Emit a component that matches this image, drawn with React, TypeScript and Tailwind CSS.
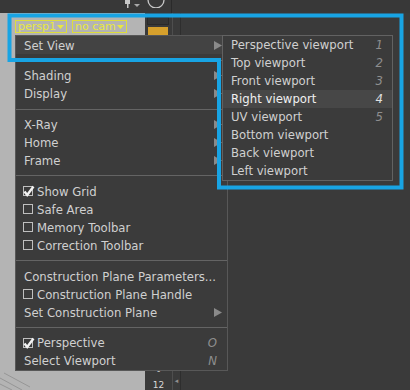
import React from "react";

type Item =
  | { sep: true }
  | {
      sep?: false;
      label: string;
      arrow?: boolean;
      check?: boolean;
      checked?: boolean;
      shortcut?: string;
      hl?: boolean;
    };

const mainItems: Item[] = [
  { label: "Set View", arrow: true, hl: true },
  { sep: true },
  { label: "Shading", arrow: true },
  { label: "Display", arrow: true },
  { sep: true },
  { label: "X-Ray", arrow: true },
  { label: "Home", arrow: true },
  { label: "Frame", arrow: true },
  { sep: true },
  { label: "Show Grid", check: true, checked: true },
  { label: "Safe Area", check: true },
  { label: "Memory Toolbar", check: true },
  { label: "Correction Toolbar", check: true },
  { sep: true },
  { label: "Construction Plane Parameters..." },
  { label: "Construction Plane Handle", check: true },
  { label: "Set Construction Plane", arrow: true },
  { sep: true },
  { label: "Perspective", check: true, checked: true, shortcut: "O" },
  { label: "Select Viewport", shortcut: "N" },
];

const subItems: { label: string; key?: string; hl?: boolean }[] = [
  { label: "Perspective viewport", key: "1" },
  { label: "Top viewport", key: "2" },
  { label: "Front viewport", key: "3" },
  { label: "Right viewport", key: "4", hl: true },
  { label: "UV viewport", key: "5" },
  { label: "Bottom viewport" },
  { label: "Back viewport" },
  { label: "Left viewport" },
];

function Arrow() {
  return (
    <svg width="8" height="9" viewBox="0 0 8 9" className="ml-auto">
      <path d="M0 0 L8 4.5 L0 9 Z" fill="#8a8a8a" />
    </svg>
  );
}

function CheckBox({ checked }: { checked?: boolean }) {
  return (
    <span className="relative w-[10px] h-[10px] border border-[#bfbfbf] mr-[4px] shrink-0">
      {checked && (
        <svg
          width="12"
          height="12"
          viewBox="0 0 12 12"
          className="absolute left-[-1px] top-[-2px]"
        >
          <path
            d="M1.5 6.5 L4.2 10 L10.5 1.5"
            fill="none"
            stroke="#f2f2f2"
            strokeWidth="2.4"
            strokeLinejoin="miter"
          />
        </svg>
      )}
    </span>
  );
}

function MainMenu() {
  return (
    <div className="absolute left-[15px] top-[35px] w-[213px] h-[336px] bg-[#3b3b3b] border border-[#585858] flex flex-col text-[11.7px] text-[#d0d0d0]">
      {mainItems.map((it, i) =>
        it.sep ? (
          <div key={i} className="h-[13px] flex items-center">
            <div className="h-px w-full bg-[#646464]" />
          </div>
        ) : (
          <div
            key={i}
            className={`h-[18px] flex items-center pr-[5px] ${
              it.check ? "pl-[7px]" : "pl-[8px]"
            } ${it.hl ? "bg-[#434343]" : ""}`}
          >
            {it.check && <CheckBox checked={it.checked} />}
            <span className="whitespace-nowrap leading-[18px] pt-[1px]">{it.label}</span>
            {it.arrow && <Arrow />}
            {it.shortcut && (
              <span className="ml-auto mr-[5px] italic text-[#8e8e8e] pt-[1px]">
                {it.shortcut}
              </span>
            )}
          </div>
        )
      )}
    </div>
  );
}

function SubMenu() {
  return (
    <div className="absolute left-[222px] top-[35px] w-[171px] h-[146px] bg-[#3b3b3b] border border-[#626262] flex flex-col text-[11.7px] text-[#d0d0d0]">
      {subItems.map((it, i) => (
        <div
          key={i}
          className={`h-[18px] flex items-center pl-[8px] pr-[9px] ${
            it.hl ? "bg-[#474747] text-[#f0f0f0]" : ""
          }`}
        >
          <span className="whitespace-nowrap pt-[1px]">{it.label}</span>
          {it.key && (
            <span
              className={`ml-auto italic pt-[1px] ${
                it.hl ? "text-[#e0e0e0]" : "text-[#8e8e8e]"
              }`}
            >
              {it.key}
            </span>
          )}
        </div>
      ))}
    </div>
  );
}

function Tag({ text }: { text: string }) {
  return (
    <div className="h-[13px] border border-[#dede3c] flex items-center px-[2px] text-[11px] leading-none text-[#e8e840]">
      <span>{text}</span>
      <svg width="7" height="5" viewBox="0 0 7 5" className="ml-[1px] mt-[1px]">
        <path d="M0 0 H7 L3.5 4 Z" fill="#e8e840" />
      </svg>
    </div>
  );
}

export default function App() {
  return (
    <div className="relative w-[410px] h-[390px] overflow-hidden bg-[#3a3a3a] font-['DejaVu_Sans',sans-serif] flex flex-col">
      {/* top bar */}
      <div className="h-[13px] flex bg-[#383838] shrink-0">
        <div className="w-[172px] flex justify-end items-start pr-[6px] gap-[3px] border-r border-[#2a2a2a]">
          <svg width="20" height="10" viewBox="0 0 20 10">
            <rect x="1" y="0" width="5" height="4" fill="#c8c8c8" />
            <rect x="3" y="4" width="1.5" height="4" fill="#c8c8c8" />
            <path d="M10 4 H16 L13 7 Z" fill="#a8a8a8" />
          </svg>
          <svg width="18" height="8" viewBox="0 0 18 8">
            <path
              d="M1 0 A8 8 0 0 0 17 0"
              fill="none"
              stroke="#c8c8c8"
              strokeWidth="1.3"
            />
          </svg>
        </div>
        <div className="flex-1" />
      </div>
      {/* body */}
      <div className="flex flex-1">
        <div className="relative w-[145px] bg-[#b4b4b4] pt-[7px] pl-[15px]">
          <div className="flex gap-[5px]">
            <Tag text="persp1" />
            <Tag text="no cam" />
          </div>
          <svg
            width="40"
            height="30"
            viewBox="0 0 40 30"
            className="absolute left-0 bottom-0"
          >
            <path
              d="M0 18 L22 30 M0 24 L12 30 M4 13 L30 27"
              stroke="#8e8e8e"
              strokeWidth="0.8"
              fill="none"
            />
          </svg>
        </div>
        <div className="w-[27px] bg-[#3a3a3a] flex flex-col items-start">
          <div className="mt-[4px] ml-[2px] w-[22px] h-[8px] border border-[#2a2a2a] bg-[#353535]" />
          <div className="mt-[2px] ml-[3px] w-[20px] h-[20px] bg-[#d6a02c]" />
          <div className="mt-auto w-full flex flex-col items-center text-[9px] text-[#d8d8d8] leading-none pb-[0px]">
            <span className="mb-[5px]">-</span>
            <span>12</span>
          </div>
        </div>
        <div className="flex-1 border-l border-[#4e4e4e] flex">
          <div className="w-[7px] flex items-end pb-[4px] justify-center text-[7px] text-[#909090]">
            ◂
          </div>
          <div className="flex-1 border-l border-[#2e2e2e]" />
        </div>
      </div>

      <MainMenu />
      <SubMenu />

      <svg
        width="410"
        height="390"
        className="absolute left-0 top-0 pointer-events-none"
      >
        <path
          d="M9.5 15.5 H401.5 V187.5 H219 V60 H9.5 Z"
          fill="none"
          stroke="#18a4e4"
          strokeWidth="4"
        />
      </svg>
    </div>
  );
}
